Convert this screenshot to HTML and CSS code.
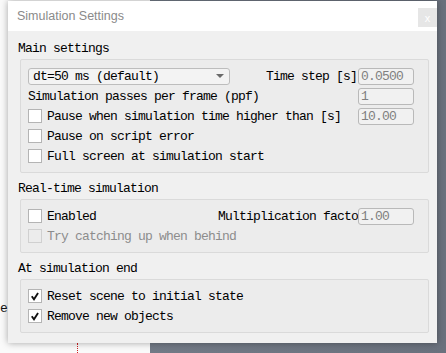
FILE: index.html
```html
<!DOCTYPE html>
<html>
<head>
<meta charset="utf-8">
<link rel="stylesheet" href="styles.css">
</head>
<body>
<div class="desktop">
  <div class="bg-left">
    <span class="bg-e">e</span>
    <div class="bg-dots"></div>
  </div>
  <div class="dialog">
    <div class="titlebar">
      <span class="title">Simulation Settings</span>
      <span class="close">x</span>
    </div>
    <div class="content">
      <div class="section-label">Main settings</div>
      <div class="group">
        <div class="row">
          <div class="combo"><span class="combo-text">dt=50 ms (default)</span><span class="arrow"></span></div>
          <span class="spacer"></span>
          <span class="rlabel-auto">Time step [s]</span>
          <span class="field">0.0500</span>
        </div>
        <div class="row">
          <span class="text">Simulation passes per frame (ppf)</span>
          <span class="spacer"></span>
          <span class="field">1</span>
        </div>
        <div class="row">
          <span class="check"></span>
          <span class="text">Pause when simulation time higher than [s]</span>
          <span class="spacer"></span>
          <span class="field">10.00</span>
        </div>
        <div class="row">
          <span class="check"></span>
          <span class="text">Pause on script error</span>
        </div>
        <div class="row">
          <span class="check"></span>
          <span class="text">Full screen at simulation start</span>
        </div>
      </div>

      <div class="section-label">Real-time simulation</div>
      <div class="group">
        <div class="row">
          <span class="check"></span>
          <span class="text">Enabled</span>
          <span class="spacer"></span>
          <span class="rlabel">Multiplication facto</span>
          <span class="field">1.00</span>
        </div>
        <div class="row">
          <span class="check disabled"></span>
          <span class="text disabled-text">Try catching up when behind</span>
        </div>
      </div>

      <div class="section-label">At simulation end</div>
      <div class="group">
        <div class="row">
          <span class="check"><svg viewBox="0 0 13 13" width="13" height="13"><path d="M3 6.2 L5.4 9.6 L9.8 2.6" fill="none" stroke="#111" stroke-width="2"/></svg></span>
          <span class="text">Reset scene to initial state</span>
        </div>
        <div class="row">
          <span class="check"><svg viewBox="0 0 13 13" width="13" height="13"><path d="M3 6.2 L5.4 9.6 L9.8 2.6" fill="none" stroke="#111" stroke-width="2"/></svg></span>
          <span class="text">Remove new objects</span>
        </div>
      </div>
    </div>
  </div>
</div>
</body>
</html>
```

FILE: styles.css
```css
html, body {
  margin: 0;
  padding: 0;
}
body {
  width: 446px;
  height: 353px;
  overflow: hidden;
  background: #5c6370;
}
.desktop {
  position: relative;
  width: 446px;
  height: 353px;
  background: linear-gradient(to right, #8f97a2 0px, #767e8a 8px, #6a717d 100%);
}
.bg-left {
  position: absolute;
  left: 0;
  top: 0;
  width: 150px;
  height: 353px;
  background: #fafafa;
}
.bg-e {
  position: absolute;
  left: 0;
  top: 301px;
  font-family: "Liberation Mono", monospace;
  font-size: 13px;
  color: #111;
}
.bg-dots {
  position: absolute;
  left: 77px;
  top: 343px;
  height: 10px;
  border-left: 1px dotted #d02020;
}
.dialog {
  position: absolute;
  left: 8px;
  top: 1px;
  width: 429px;
  height: 342px;
  background: #f0f0f0;
  box-shadow: 0 0 7px rgba(0, 0, 0, 0.35);
  display: flex;
  flex-direction: column;
}
.titlebar {
  flex: none;
  height: 30px;
  background: #ffffff;
  display: flex;
  align-items: center;
  padding-left: 9px;
  position: relative;
}
.title {
  font-family: "Liberation Sans", Arial, sans-serif;
  font-size: 12.5px;
  color: #8a8a8a;
}
.close {
  position: absolute;
  right: 0;
  top: 7px;
  width: 19px;
  height: 19px;
  background: #e6e6e6;
  color: #ffffff;
  font-family: "Liberation Sans", Arial, sans-serif;
  font-size: 11px;
  display: flex;
  align-items: center;
  justify-content: center;
}
.content {
  flex: none;
  padding: 8px 8px 10px 10px;
  font-family: "Liberation Mono", "Courier New", monospace;
  font-size: 13px;
  letter-spacing: -0.8px;
  color: #000;
}
.section-label {
  height: 20px;
  line-height: 20px;
}
.group {
  margin-left: 2px;
  margin-bottom: 6px;
  border: 1px solid #dadada;
  border-radius: 2px;
  background: #ececec;
  padding: 6px 14px 6px 7px;
}
.group:last-child {
  margin-bottom: 0;
}
.row {
  height: 20px;
  display: flex;
  align-items: center;
  white-space: nowrap;
}
.spacer {
  flex: 1;
}
.combo {
  flex: none;
  width: 196px;
  height: 15px;
  border: 1px solid #bdbdbd;
  border-radius: 3px;
  background: #f3f3f3;
  display: flex;
  align-items: center;
  padding-left: 4px;
  box-sizing: content-box;
}
.combo-text {
  flex: 1;
}
.arrow {
  width: 0;
  height: 0;
  border-left: 4px solid transparent;
  border-right: 4px solid transparent;
  border-top: 4px solid #6a6a6a;
  margin-right: 5px;
}
.rlabel-auto {
  flex: none;
  padding-right: 1px;
}
.rlabel {
  flex: none;
  width: 140px;
  overflow: hidden;
}
.field {
  flex: none;
  width: 52px;
  height: 15px;
  border: 1px solid #b9b9b9;
  border-radius: 3px;
  background: #f1f1f1;
  color: #808080;
  padding-left: 2px;
  display: flex;
  align-items: center;
}
.check {
  width: 12px;
  height: 12px;
  border: 1px solid #b4b4b4;
  background: #ffffff;
  margin-right: 5px;
  display: flex;
  align-items: center;
  justify-content: center;
  flex: none;
}
.check svg {
  display: block;
}
.check.disabled {
  background: #ececec;
  border-color: #d0d0d0;
}
.disabled-text {
  color: #8c8c8c;
}
```
